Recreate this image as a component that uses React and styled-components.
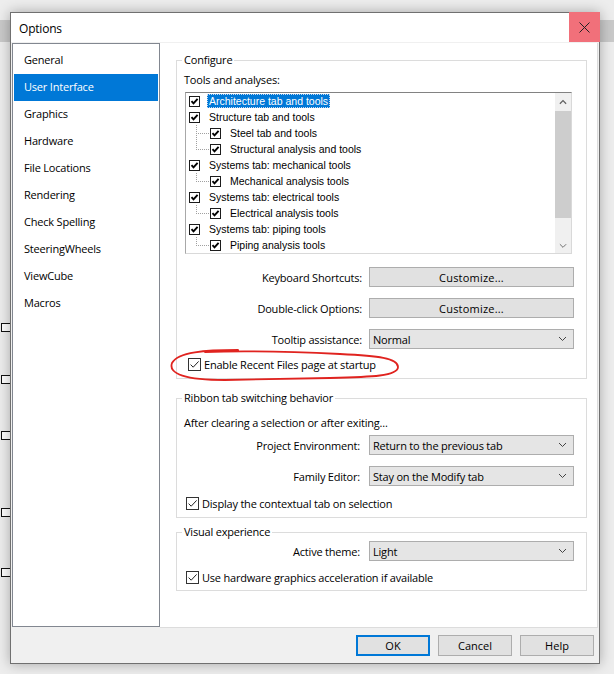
import React from 'react'
import styled, { createGlobalStyle } from 'styled-components'

const GlobalStyle = createGlobalStyle`
	html, body {
		margin: 0;
		padding: 0;
	}
	body {
		background: #ececec;
		font-family: "Open Sans", "Noto Sans", sans-serif;
		font-size: 11px;
		letter-spacing: -0.2px;
		color: #000;
	}
`

const Desktop = styled.div`
	position: relative;
	width: 614px;
	height: 674px;
	overflow: hidden;
	box-sizing: border-box;
	padding: 12px 0 0 10px;
	background: #ededed;
`

const BehindBar = styled.div`
	position: absolute;
	left: 0;
	right: 0;
	top: 20px;
	height: 22px;
	background: #c9c9c9;
`

const BehindBox = styled.div`
	position: absolute;
	left: 1px;
	width: 12px;
	height: 7px;
	border: 1px solid #111;
	background: #fff;
`

const Dialog = styled.div`
	position: relative;
	z-index: 1;
	width: 590px;
	height: 652px;
	box-sizing: border-box;
	border: 1px solid #707070;
	background: #f0f0f0;
	box-shadow: 0 0 12px rgba(0, 0, 0, 0.3);
	display: flex;
	flex-direction: column;
`

const TitleBar = styled.header`
	height: 29px;
	flex: none;
	background: #fff;
	display: flex;
	align-items: center;
	justify-content: space-between;
`

const Title = styled.h1`
	margin: 1px 0 0 8px;
	font-size: 12px;
	font-weight: normal;
`

const CloseButton = styled.div`
	width: 31px;
	height: 30px;
	margin-top: -1px;
	margin-right: -1px;
	background: #f1707a;
	display: flex;
	align-items: center;
	justify-content: center;
`

const Body = styled.div`
	display: flex;
	padding: 1px 0 0 1px;
	flex: none;
`

const Nav = styled.ul`
	list-style: none;
	margin: 0;
	width: 148px;
	height: 584px;
	box-sizing: border-box;
	border: 1px solid #828790;
	background: #fff;
	padding: 3px 1px;
`

const NavItem = styled.li`
	height: 27px;
	line-height: 26px;
	padding-left: 10px;
	background: ${p => (p.$active ? '#0078d7' : 'transparent')};
	color: ${p => (p.$active ? '#fff' : '#000')};
`

const Panel = styled.section`
	width: 438px;
	height: 585px;
	box-sizing: border-box;
	background: #fff;
	border-right: 1px solid #dcdcdc;
	border-bottom: 1px solid #dcdcdc;
	padding: 10px 10px 0 16px;
`

const Group = styled.fieldset`
	margin: ${p => p.$top || 0}px 0 0 0;
	padding: 0;
	border: 1px solid #dcdcdc;
	min-width: 0;
`

const Legend = styled.legend`
	margin-left: 5px;
	padding: 0 2px;
	line-height: 14px;
`

const GroupBody = styled.div`
	padding: ${p => p.$pad};
`

const Caption = styled.div`
	line-height: 14px;
`

const Tree = styled.div`
	margin: 5px 2px 0 1px;
	height: 162px;
	box-sizing: border-box;
	border: 1px solid #d9d9d9;
	border-top-color: #828282;
	border-left-color: #a8a8a8;
	display: flex;
	font-family: "Liberation Sans", Arial, sans-serif;
	font-size: 10.5px;
	letter-spacing: 0;
`

const TreeList = styled.div`
	flex: 1;
`

const TreeRow = styled.div`
	height: 16px;
	display: flex;
	align-items: center;
	padding-left: ${p => (p.$level ? 10 : 3)}px;
`

const Connector = styled.span`
	position: relative;
	flex: none;
	align-self: stretch;
	width: 14px;

	&::before {
		content: '';
		position: absolute;
		left: 0;
		top: 0;
		width: 1px;
		height: ${p => (p.$last ? '9px' : '100%')};
		background: repeating-linear-gradient(to bottom, #a0a0a0 0 1px, transparent 1px 2px);
	}

	&::after {
		content: '';
		position: absolute;
		left: 0;
		top: 8px;
		width: 13px;
		height: 1px;
		background: repeating-linear-gradient(to right, #a0a0a0 0 1px, transparent 1px 2px);
	}
`

const ClassicBox = styled.span`
	flex: none;
	width: 11px;
	height: 11px;
	box-sizing: border-box;
	border: 1px solid #1c1c1c;
	background: #fff;
	display: flex;
`

const TreeLabel = styled.span`
	margin-left: 7px;
	padding: 0 2px;
	line-height: 14px;
	white-space: nowrap;
	background: ${p => (p.$selected ? '#0078d7' : 'transparent')};
	color: ${p => (p.$selected ? '#fff' : '#000')};
	outline: ${p => (p.$selected ? '1px dotted #c8d8f0' : 'none')};
	outline-offset: -1px;
`

const Scrollbar = styled.div`
	width: 16px;
	flex: none;
	background: #f0f0f0;
	display: flex;
	flex-direction: column;
`

const Arrow = styled.div`
	height: ${p => p.$h}px;
	flex: none;
	display: flex;
	align-items: center;
	justify-content: center;
`

const Thumb = styled.div`
	height: 107px;
	flex: none;
	background: #cdcdcd;
`

const Track = styled.div`
	flex: 1;
`

const FormGrid = styled.div`
	display: grid;
	grid-template-columns: 1fr 205px;
	grid-auto-rows: 20px;
	column-gap: ${p => p.$gap || 8}px;
	row-gap: 11px;
	align-items: center;
	margin-top: ${p => p.$top || 0}px;
`

const FieldLabel = styled.span`
	text-align: right;
	white-space: nowrap;
`

const PushButton = styled.button`
	align-self: stretch;
	font: inherit;
	color: #000;
	background: #e1e1e1;
	border: 1px solid #adadad;
	padding: 0;
	letter-spacing: 0.2px;
`

const Combo = styled.div`
	align-self: stretch;
	box-sizing: border-box;
	border: 1px solid #adadad;
	background: #e5e5e5;
	display: flex;
	align-items: center;
	justify-content: space-between;
	padding: 0 6px 0 3px;
`

const CheckRow = styled.label`
	display: flex;
	align-items: center;
	height: 16px;
	margin: ${p => p.$top || 0}px 0 0 ${p => p.$indent || 2}px;
`

const FlatBox = styled.span`
	flex: none;
	width: 13px;
	height: 13px;
	box-sizing: border-box;
	border: 1px solid #333;
	background: #fff;
	display: flex;
	margin-right: 3px;
`

const Footer = styled.footer`
	flex: 1;
	display: flex;
	justify-content: flex-end;
	align-items: flex-start;
	gap: 8px;
	padding: 7px 5px 0 0;
`

const DialogButton = styled.button`
	width: 74px;
	height: 21px;
	box-sizing: border-box;
	font: inherit;
	color: #000;
	background: #e1e1e1;
	border: ${p => (p.$primary ? '2px solid #0078d7' : '1px solid #adadad')};
	padding: 0;
`

const Annotation = styled.svg`
	position: absolute;
	left: 0;
	top: 0;
	z-index: 2;
	pointer-events: none;
`

const navItems = ['General', 'User Interface', 'Graphics', 'Hardware', 'File Locations', 'Rendering', 'Check Spelling', 'SteeringWheels', 'ViewCube', 'Macros']

const treeItems = [
	{ label: 'Architecture tab and tools', level: 0, selected: true },
	{ label: 'Structure tab and tools', level: 0 },
	{ label: 'Steel tab and tools', level: 1 },
	{ label: 'Structural analysis and tools', level: 1, last: true },
	{ label: 'Systems tab: mechanical tools', level: 0 },
	{ label: 'Mechanical analysis tools', level: 1, last: true },
	{ label: 'Systems tab: electrical tools', level: 0 },
	{ label: 'Electrical analysis tools', level: 1, last: true },
	{ label: 'Systems tab: piping tools', level: 0 },
	{ label: 'Piping analysis tools', level: 1, last: true },
]

const behindBoxes = [323, 375, 431, 508, 568]

function BoldCheck() {
	return (
		<svg width="9" height="9" viewBox="0 0 9 9">
			<polyline points="1.5,4.2 3.5,6.4 7.6,1.8" fill="none" stroke="#000" strokeWidth="1.9" />
		</svg>
	)
}

function ThinCheck() {
	return (
		<svg width="11" height="11" viewBox="0 0 11 11">
			<polyline points="1.6,5.6 4.2,8.2 9.6,2.4" fill="none" stroke="#222" strokeWidth="1" />
		</svg>
	)
}

function Chevron({ up, size = 9, color = '#444' }) {
	return (
		<svg width={size} height="6" viewBox="0 0 9 6">
			<polyline points={up ? '1,5 4.5,1.5 8,5' : '1,1 4.5,4.5 8,1'} fill="none" stroke={color} strokeWidth={up ? 1.4 : 1} />
		</svg>
	)
}

function Check({ children, indent, top }) {
	return (
		<CheckRow $indent={indent} $top={top}>
			<FlatBox><ThinCheck /></FlatBox>
			{children}
		</CheckRow>
	)
}

function Select({ value }) {
	return (
		<Combo>
			<span>{value}</span>
			<Chevron />
		</Combo>
	)
}

export default function App() {
	return (
		<Desktop>
			<GlobalStyle />
			<BehindBar />
			{behindBoxes.map(y => <BehindBox key={y} style={{ top: y }} />)}

			<Dialog>
				<TitleBar>
					<Title>Options</Title>
					<CloseButton>
						<svg width="11" height="11" viewBox="0 0 11 11">
							<path d="M0.5 0.5 L10.5 10.5 M10.5 0.5 L0.5 10.5" stroke="#222" strokeWidth="1" />
						</svg>
					</CloseButton>
				</TitleBar>

				<Body>
					<Nav>
						{navItems.map(item => (
							<NavItem key={item} $active={item === 'User Interface'}>{item}</NavItem>
						))}
					</Nav>

					<Panel>
						<Group>
							<Legend>Configure</Legend>
							<GroupBody $pad="6px 12px 6px 7px">
								<Caption>Tools and analyses:</Caption>
								<Tree>
									<TreeList>
										{treeItems.map(item => (
											<TreeRow key={item.label} $level={item.level}>
												{item.level > 0 && <Connector $last={item.last} />}
												<ClassicBox><BoldCheck /></ClassicBox>
												<TreeLabel $selected={item.selected}>{item.label}</TreeLabel>
											</TreeRow>
										))}
									</TreeList>
									<Scrollbar>
										<Arrow $h={18}><Chevron up size={8} color="#606060" /></Arrow>
										<Thumb />
										<Track />
										<Arrow $h={15}><Chevron size={8} color="#606060" /></Arrow>
									</Scrollbar>
								</Tree>

								<FormGrid $top={13} $gap={7}>
									<FieldLabel>Keyboard Shortcuts:</FieldLabel>
									<PushButton>Customize...</PushButton>
									<FieldLabel>Double-click Options:</FieldLabel>
									<PushButton>Customize...</PushButton>
									<FieldLabel>Tooltip assistance:</FieldLabel>
									<Select value="Normal" />
								</FormGrid>

								<Check indent={4} top={7}>Enable Recent Files page at startup</Check>
							</GroupBody>
						</Group>

						<Group $top={12}>
							<Legend>Ribbon tab switching behavior</Legend>
							<GroupBody $pad="11px 12px 6px 7px">
								<Caption>After clearing a selection or after exiting...</Caption>
								<FormGrid $top={5} $gap={9}>
									<FieldLabel>Project Environment:</FieldLabel>
									<Select value="Return to the previous tab" />
									<FieldLabel>Family Editor:</FieldLabel>
									<Select value="Stay on the Modify tab" />
								</FormGrid>
								<Check top={9}>Display the contextual tab on selection</Check>
							</GroupBody>
						</Group>

						<Group $top={7}>
							<Legend>Visual experience</Legend>
							<GroupBody $pad="2px 12px 5px 7px">
								<FormGrid $gap={9}>
									<FieldLabel>Active theme:</FieldLabel>
									<Select value="Light" />
								</FormGrid>
								<Check top={8}>Use hardware graphics acceleration if available</Check>
							</GroupBody>
						</Group>
					</Panel>
				</Body>

				<Footer>
					<DialogButton $primary>OK</DialogButton>
					<DialogButton>Cancel</DialogButton>
					<DialogButton>Help</DialogButton>
				</Footer>
			</Dialog>

			<Annotation width="614" height="674" viewBox="0 0 614 674">
				<path
					d="M 238 350 C 205 350, 178 352, 172 363 C 168 374, 186 380, 225 380 L 330 378 C 372 377, 398 376, 398 367 C 398 358, 378 356, 340 354 C 300 352, 255 350, 205 352"
					fill="none"
					stroke="#e0231f"
					strokeWidth="1.8"
					strokeLinecap="round"
				/>
			</Annotation>
		</Desktop>
	)
}
